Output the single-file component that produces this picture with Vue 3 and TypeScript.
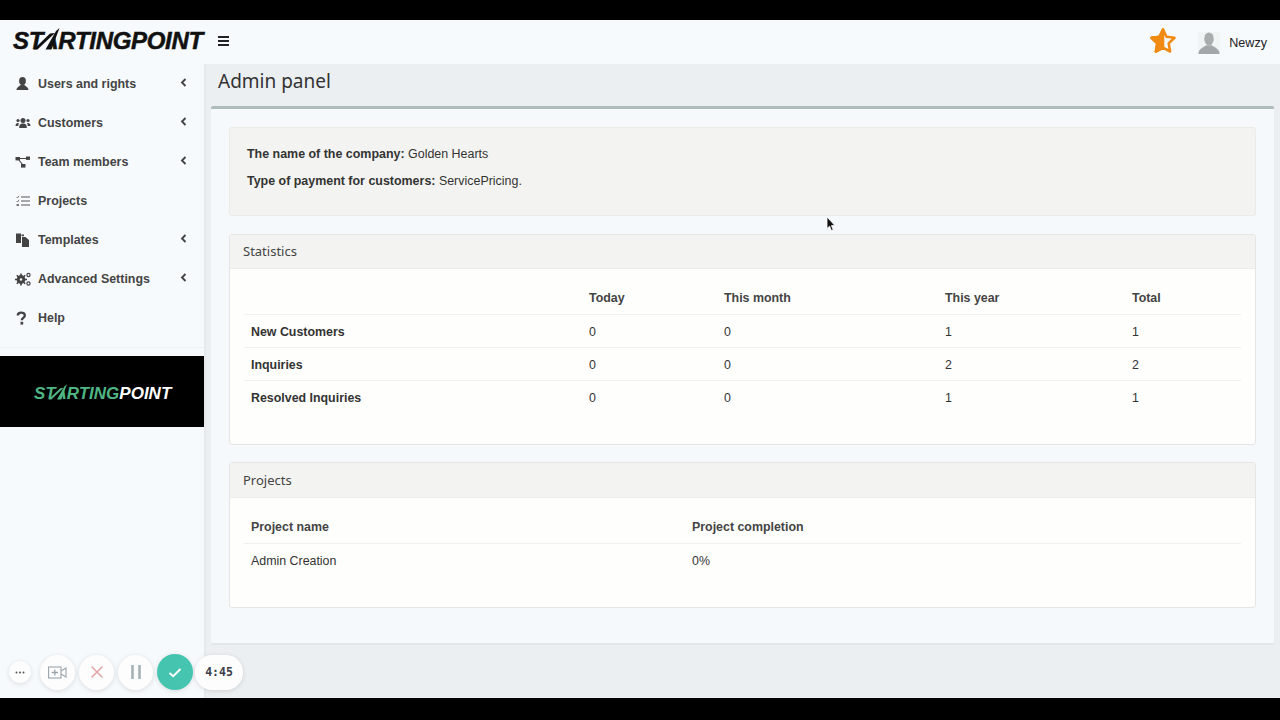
<template>
  <div class="screen">
    <div class="letterbox top"></div>
    <header class="topbar">
      <div class="brand">
        <span class="logo">
          <span class="logo-text">STARTINGPOINT</span>
          <svg class="logo-cut" viewBox="0 0 60 24"><path d="M24 21 H33 L46 1 L34 2 Z" fill="#f6fafc" /><path d="M20.5 20.5 H24.5 L42 4 L37 4.5 Z" fill="#111" /><path d="M32.5 20.5 H38.5 L46.5 -1 L43 2 Z" fill="#111" /></svg>
        </span>
        <svg class="burger" width="11" height="10" viewBox="0 0 11 10"><path d="M0 1h11M0 5h11M0 9h11" stroke="#222" stroke-width="2" /></svg>
      </div>
      <div class="top-right">
        <svg class="star" width="28" height="28" viewBox="0 0 28 28">
          <path d="M14 2.5 L17.5 9.8 L25.5 10.8 L19.7 16.4 L21.1 24.5 L14 20.6 L6.9 24.5 L8.3 16.4 L2.5 10.8 L10.5 9.8 Z" fill="#f6fafc" stroke="#f08a12" stroke-width="2.6" stroke-linejoin="round" />
          <path d="M14 2.5 L14 20.6 L6.9 24.5 L8.3 16.4 L2.5 10.8 L10.5 9.8 Z" fill="#f08a12" stroke="#f08a12" stroke-width="2.6" stroke-linejoin="round" />
        </svg>
        <svg class="avatar" width="22" height="22" viewBox="0 0 24 24">
          <rect width="24" height="24" fill="#f1f4f5" />
          <ellipse cx="12" cy="7.5" rx="5.2" ry="7" fill="#a9adae" />
          <path d="M0.5 24 C0.5 18 6 17 9 14.5 H15 C18 17 23.5 18 23.5 24 Z" fill="#a3a7a8" />
        </svg>
        <span class="user-name">Newzy</span>
      </div>
    </header>

    <div class="body-row">
      <aside class="sidebar">
        <nav>
          <a v-for="item in menu" :key="item.label" class="nav-item">
            <svg class="nav-icon" width="16" height="14" viewBox="0 0 16 14" v-html="item.icon"></svg>
            <span class="nav-label">{{ item.label }}</span>
            <svg v-if="item.arrow" class="chevron" width="7" height="9" viewBox="0 0 7 9"><path d="M5.5 1 L2 4.5 L5.5 8" fill="none" stroke="#444" stroke-width="1.9" /></svg>
          </a>
        </nav>
        <div class="side-sep"></div>
        <div class="side-logo">
          <span class="side-logo-inner">
            <span class="green">STARTING</span><span class="white">POINT</span>
            <svg class="side-cut" viewBox="0 0 60 24"><path d="M24 21 H33 L46 1 L34 2 Z" fill="#000" /><path d="M20.5 20.5 H24.5 L42 4 L37 4.5 Z" fill="#4fb583" /><path d="M32.5 20.5 H38.5 L46.5 -1 L43 2 Z" fill="#4fb583" /></svg>
          </span>
        </div>
      </aside>

      <main class="content">
        <h1 class="page-title">Admin panel</h1>
        <section class="box">
          <div class="well">
            <p><b>The name of the company:</b> Golden Hearts</p>
            <p><b>Type of payment for customers:</b> ServicePricing.</p>
          </div>

          <div class="panel stats">
            <div class="panel-head">Statistics</div>
            <div class="panel-body">
              <table>
                <colgroup>
                  <col style="width: 338px" /><col style="width: 135px" /><col style="width: 221px" /><col style="width: 187px" /><col />
                </colgroup>
                <thead>
                  <tr><th></th><th>Today</th><th>This month</th><th>This year</th><th>Total</th></tr>
                </thead>
                <tbody>
                  <tr v-for="row in stats" :key="row.name">
                    <th>{{ row.name }}</th>
                    <td v-for="(v, i) in row.values" :key="i">{{ v }}</td>
                  </tr>
                </tbody>
              </table>
            </div>
          </div>

          <div class="panel projects">
            <div class="panel-head">Projects</div>
            <div class="panel-body">
              <table>
                <colgroup><col style="width: 441px" /><col /></colgroup>
                <thead>
                  <tr><th>Project name</th><th>Project completion</th></tr>
                </thead>
                <tbody>
                  <tr><td>Admin Creation</td><td>0%</td></tr>
                </tbody>
              </table>
            </div>
          </div>
        </section>
      </main>
    </div>
    <div class="letterbox bottom"></div>

    <!-- recorder controls, over the page -->
    <div class="recorder">
      <div class="rec-btn small">
        <svg width="10" height="3" viewBox="0 0 10 3"><circle cx="1.5" cy="1.5" r="1" fill="#555" /><circle cx="5" cy="1.5" r="1" fill="#555" /><circle cx="8.5" cy="1.5" r="1" fill="#555" /></svg>
      </div>
      <div class="rec-btn">
        <svg width="19" height="13" viewBox="0 0 19 13" fill="none" stroke="#9aa5ab" stroke-width="1.1">
          <rect x="0.6" y="1" width="12.4" height="11" />
          <path d="M13 5 L18 2 V11 L13 8" />
          <path d="M6.8 3.4v6.2M3.7 6.5h6.2" stroke-width="1.3" />
        </svg>
      </div>
      <div class="rec-btn">
        <svg width="14" height="14" viewBox="0 0 14 14"><path d="M1.5 1.5 L12.5 12.5 M12.5 1.5 L1.5 12.5" stroke="#e3a5a5" stroke-width="1.6" /></svg>
      </div>
      <div class="rec-btn">
        <svg width="10" height="14" viewBox="0 0 10 14"><path d="M1.5 0v14M8.5 0v14" stroke="#a6b1b6" stroke-width="2.6" /></svg>
      </div>
      <div class="rec-btn go">
        <svg width="14" height="11" viewBox="0 0 14 11"><path d="M1.5 6 L5.2 9.2 L12.5 2" fill="none" stroke="#fff" stroke-width="2" /></svg>
      </div>
      <div class="rec-time">4:45</div>
    </div>

    <svg class="cursor" width="10" height="16" viewBox="0 0 10 16">
      <path d="M1 1 V12.5 L3.6 10.2 L5.4 14.5 L7.2 13.7 L5.4 9.6 L8.8 9.4 Z" fill="#111" stroke="#fff" stroke-width="0.8" />
    </svg>
  </div>
</template>

<script setup lang="ts">
interface MenuItem {
  label: string
  arrow: boolean
  icon: string
}

const c = 'fill="#444"'

const menu: MenuItem[] = [
  {
    label: 'Users and rights',
    arrow: true,
    icon: `<ellipse cx="7.5" cy="4" rx="3.4" ry="4" ${c}/><path d="M1.5 13 C1.5 10 4.5 9.5 6 7.5 H9 C10.5 9.5 13.5 10 13.5 13 Z" ${c}/>`
  },
  {
    label: 'Customers',
    arrow: true,
    icon: `<circle cx="8" cy="4.5" r="2.5" ${c}/><circle cx="3" cy="4.5" r="1.6" ${c}/><circle cx="13" cy="4.5" r="1.6" ${c}/><path d="M4.2 12 C4.2 8.5 5.5 7.6 8 7.6 C10.5 7.6 11.8 8.5 11.8 12 Z" ${c}/><path d="M0.5 10 C0.5 7.5 2 7 3.8 7 L3.2 10 Z M15.5 10 C15.5 7.5 14 7 12.2 7 L12.8 10 Z" ${c}/>`
  },
  {
    label: 'Team members',
    arrow: true,
    icon: `<rect x="0.5" y="2" width="4.5" height="3.4" ${c}/><rect x="11" y="1.5" width="4" height="3.4" ${c}/><rect x="6" y="9" width="4.5" height="3.6" ${c}/><path d="M4 3.5 H11 M3.5 4.5 L7.5 9.5" stroke="#444" stroke-width="1.1"/>`
  },
  {
    label: 'Projects',
    arrow: false,
    icon: `<path d="M6 3h9M6 7h9M6 11h9" stroke="#555" stroke-width="1.2"/><path d="M1.5 3 L2.5 4 L4 1.8 M1.5 7 L2.5 8 L4 5.8" stroke="#777" fill="none"/><path d="M1.5 10h2.5v2h-2.5z" fill="#777"/>`
  },
  {
    label: 'Templates',
    arrow: true,
    icon: `<path d="M1 0.5 H6 V10 H1 Z" ${c}/><path d="M7 4 H10.5 L14 7 V14 H7 Z" ${c}/><path d="M6.5 1.5 H9 V3.2 H6.5 Z" ${c}/>`
  },
  {
    label: 'Advanced Settings',
    arrow: true,
    icon: `<circle cx="6" cy="7.5" r="3.2" fill="none" stroke="#444" stroke-width="2.4"/><path d="M6 1.5v12M0 7.5h12M1.8 3.3l8.4 8.4M10.2 3.3l-8.4 8.4" stroke="#444" stroke-width="1.6"/><circle cx="6" cy="7.5" r="1.2" fill="#f5f9fb"/><circle cx="13.5" cy="3" r="1.6" fill="none" stroke="#444" stroke-width="1.2"/><circle cx="13.5" cy="11.5" r="1.6" fill="none" stroke="#444" stroke-width="1.2"/>`
  },
  {
    label: 'Help',
    arrow: false,
    icon: `<path d="M2.8 4.5 C2.8 0.8 9.8 0.6 9.8 4.5 C9.8 7 6.8 6.8 6.8 9.2" fill="none" stroke="#444" stroke-width="2.4"/><rect x="5.5" y="10.8" width="2.7" height="2.8" ${c}/>`
  }
]

const stats = [
  { name: 'New Customers', values: [0, 0, 1, 1] },
  { name: 'Inquiries', values: [0, 0, 2, 2] },
  { name: 'Resolved Inquiries', values: [0, 0, 1, 1] }
]
</script>

<style>
html,
body {
  margin: 0;
  background: #000;
}
</style>

<style scoped>
.screen {
  position: relative;
  width: 1280px;
  height: 720px;
  overflow: hidden;
  display: flex;
  flex-direction: column;
  font-family: "Liberation Sans", Arial, sans-serif;
  font-size: 13px;
  color: #333;
  background: #ebeff2;
}

.letterbox {
  background: #000;
  flex: none;
}
.letterbox.top {
  height: 20px;
}
.letterbox.bottom {
  height: 22px;
}

.topbar {
  height: 44px;
  flex: none;
  display: flex;
  align-items: center;
  justify-content: space-between;
  background: #f6fafc;
}
.brand {
  display: flex;
  align-items: center;
  padding-left: 13px;
}
.logo {
  position: relative;
  display: block;
  margin-top: -3px;
}
.logo-text {
  display: block;
  width: 191px;
  font-size: 24px;
  line-height: 24px;
  font-weight: 700;
  font-style: italic;
  letter-spacing: -0.3px;
  color: #111;
  white-space: nowrap;
  -webkit-text-stroke: 0.5px #111;
}
.logo-cut {
  position: absolute;
  left: 0;
  top: 0;
  width: 60px;
  height: 24px;
  overflow: visible;
}
.burger {
  margin-left: 14px;
  margin-top: -3px;
}
.top-right {
  display: flex;
  align-items: center;
  padding-right: 13px;
}
.star {
  margin-top: -3px;
}
.avatar {
  margin-left: 21px;
  margin-top: 2px;
}
.user-name {
  margin-left: 9px;
  margin-top: 1px;
  font-size: 12.6px;
  color: #222;
}

.body-row {
  flex: 1;
  min-height: 0;
  display: flex;
}

.sidebar {
  width: 204px;
  flex: none;
  background: #f6fafc;
  border-right: 2px solid #e6eaec;
}
.nav-item {
  height: 39px;
  display: flex;
  align-items: center;
  padding-left: 15px;
  box-sizing: border-box;
  color: #444;
  font-size: 12.45px;
  font-weight: 700;
}
.nav-icon {
  flex: none;
}
.nav-label {
  margin-left: 7px;
  padding-top: 1px;
  flex: 1;
}
.chevron {
  margin-right: 17px;
  margin-top: -3px;
}
.side-sep {
  height: 10px;
  border-bottom: 1px solid #eef1f3;
}
.side-logo {
  height: 71px;
  margin-top: 8px;
  padding: 3px 0 0 34px;
  box-sizing: border-box;
  background: #000;
  display: flex;
  align-items: center;
}
.side-logo-inner {
  position: relative;
  display: block;
  font-size: 17px;
  line-height: 17px;
  font-weight: 700;
  font-style: italic;
  white-space: nowrap;
}
.side-cut {
  position: absolute;
  left: 0;
  top: 0;
  width: 42.5px;
  height: 17px;
  overflow: visible;
}
.green {
  color: #4fb583;
}
.white {
  color: #fff;
}

.content {
  flex: 1;
  min-width: 0;
  padding: 0 6px 0 5px;
}
.page-title {
  margin: 0;
  height: 42px;
  padding: 4px 0 0 7px;
  box-sizing: border-box;
  font-family: "Noto Sans", "Open Sans", sans-serif;
  font-size: 19px;
  line-height: 26px;
  font-weight: 400;
  color: #333;
}
.box {
  height: 539px;
  box-sizing: border-box;
  background: #f5f9fb;
  border-top: 3px solid #aebcbc;
  border-bottom: 2px solid #e3e6e8;
  border-radius: 2px;
  box-shadow: 1px 0 0 #e8ecee;
  padding: 18px 18px 0;
}

.well {
  height: 89px;
  box-sizing: border-box;
  background: #f3f3f1;
  border: 1px solid #ebebe8;
  border-radius: 3px;
  padding: 18px 17px 0;
  margin-bottom: 18px;
  color: #333;
}
.well p {
  margin: 0 0 11px;
  line-height: 16px;
  font-size: 12.45px;
}
.well b {
  font-weight: 700;
}

.panel {
  background: #fefefc;
  border: 1px solid #e5e6e5;
  border-radius: 3px;
  box-sizing: border-box;
  margin-bottom: 17px;
}
.panel.stats {
  height: 211px;
}
.panel.projects {
  height: 146px;
}
.panel-head {
  height: 34px;
  box-sizing: border-box;
  background: #f3f3f1;
  border-bottom: 1px solid #ececea;
  padding: 0 13px;
  font-family: "Noto Sans", "Open Sans", sans-serif;
  font-size: 13px;
  line-height: 33px;
  color: #444;
}
.projects .panel-head {
  height: 35px;
  line-height: 35px;
}
.panel-body {
  padding: 12px 14px;
}
table {
  width: 100%;
  border-collapse: collapse;
  table-layout: fixed;
  font-size: 12.4px;
}
th,
td {
  height: 33px;
  padding: 1px 7px 0;
  text-align: left;
  box-sizing: border-box;
  color: #333;
}
tbody th,
tbody td {
  padding-top: 3px;
}
th {
  font-weight: 700;
}
thead th {
  color: #444;
}
tr {
  border-top: 1px solid #f0f0ee;
}
thead tr {
  border-top: none;
}

.recorder {
  position: absolute;
  left: 9px;
  top: 654px;
  display: flex;
  align-items: center;
  height: 36px;
}
.rec-btn {
  width: 35px;
  height: 35px;
  margin-right: 4px;
  border-radius: 50%;
  background: #fdfdfd;
  box-shadow: 0 1px 5px rgba(0, 0, 0, 0.12);
  display: flex;
  align-items: center;
  justify-content: center;
}
.rec-btn.small {
  width: 22px;
  height: 22px;
  margin-right: 9px;
}
.rec-btn.go {
  width: 36px;
  height: 36px;
  background: #45c5b0;
  margin-right: 2px;
}
.rec-time {
  width: 48px;
  height: 35px;
  border-radius: 17px;
  background: #fdfdfd;
  box-shadow: 0 1px 5px rgba(0, 0, 0, 0.12);
  text-align: center;
  line-height: 35px;
  font-family: "DejaVu Sans Mono", monospace;
  font-size: 11.5px;
  font-weight: 700;
  color: #3c3f4a;
}

.cursor {
  position: absolute;
  left: 826px;
  top: 216px;
}
</style>
